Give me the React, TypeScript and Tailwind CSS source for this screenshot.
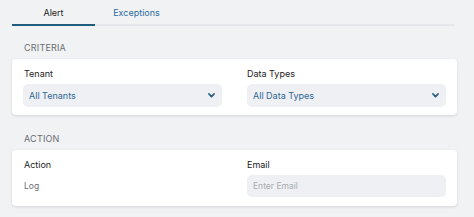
import React from 'react';

function Chevron() {
  return (
    <svg width="7" height="5" viewBox="0 0 7 5" className="text-[#245d86]">
      <path d="M1 1 L3.5 3.6 L6 1" fill="none" stroke="currentColor" strokeWidth="1.8" strokeLinecap="round" strokeLinejoin="round" />
    </svg>
  );
}

function Select({ value }: { value: string }) {
  return (
    <div className="flex h-[23px] items-center justify-between rounded-[5px] bg-[#eef0f3] pl-[6px] pr-[7px]">
      <span className="text-[9px] text-[#2f6796]">{value}</span>
      <Chevron />
    </div>
  );
}

export default function App() {
  return (
    <div
      className="h-[217px] w-[474px] overflow-hidden bg-[#f1f2f4] text-[#222]"
      style={{ fontFamily: 'Inter, "Noto Sans", sans-serif' }}
    >
      <div className="flex h-[26px] items-end pl-[12px] pr-[19px]">
        <div className="flex h-full w-[83px] flex-col">
          <div className="flex flex-1 items-center justify-center pt-[2px] text-[9px] text-[#222]">Alert</div>
          <div className="h-[2px] bg-[#1f5d7e]" />
        </div>
        <div className="flex h-full w-[83px] flex-col">
          <div className="flex flex-1 items-center justify-center pt-[2px] text-[9px] text-[#2a6ca0]">Exceptions</div>
          <div className="h-[2px] bg-[#e6e7ea]" />
        </div>
        <div className="h-[2px] flex-1 bg-[#e6e7ea]" />
      </div>

      <div className="px-[12px] pr-[17px]">
        <div className="pb-[5px] pl-[12px] pt-[16px] text-[9px] leading-[12px] tracking-[0.2px] text-[#6b6e73]">CRITERIA</div>
        <div className="grid grid-cols-2 gap-[25px] rounded-[4px] bg-white px-[11px] pb-[8px] pt-[8px] shadow-[0_1px_3px_rgba(0,0,0,0.12)]">
          <div className="flex flex-col gap-[4px]">
            <div className="pl-[1px] text-[9px] leading-[13px]">Tenant</div>
            <Select value="All Tenants" />
          </div>
          <div className="flex flex-col gap-[4px]">
            <div className="text-[9px] leading-[13px]">Data Types</div>
            <Select value="All Data Types" />
          </div>
        </div>

        <div className="pb-[5px] pl-[12px] pt-[18px] text-[9px] leading-[12px] tracking-[0.2px] text-[#6b6e73]">ACTION</div>
        <div className="grid grid-cols-2 gap-[25px] rounded-[4px] bg-white px-[11px] pb-[9px] pt-[8px] shadow-[0_1px_3px_rgba(0,0,0,0.12)]">
          <div className="flex flex-col gap-[4px]">
            <div className="pl-[1px] text-[9px] leading-[13px]">Action</div>
            <div className="flex h-[22px] items-center pl-[1px] text-[8.5px] text-[#6b6e73]">Log</div>
          </div>
          <div className="flex flex-col gap-[4px]">
            <div className="text-[9px] leading-[13px]">Email</div>
            <div className="flex h-[22px] items-center rounded-[5px] bg-[#eef0f3] pl-[6px] text-[8.5px] text-[#a9acb1]">
              Enter Email
            </div>
          </div>
        </div>
      </div>
    </div>
  );
}
